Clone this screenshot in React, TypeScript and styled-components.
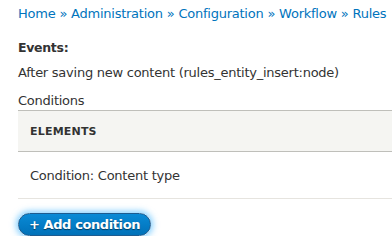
import styled, { createGlobalStyle } from 'styled-components';

const GlobalStyle = createGlobalStyle`
  html, body {
    margin: 0;
    padding: 0;
    background: #fff;
  }
  body {
    font-family: 'DejaVu Sans', 'Noto Sans', sans-serif;
    font-size: 13px;
    color: #333;
  }
`;

const S_Page = styled.div`
  padding: 6px 0 0 18px;
  width: 392px;
  box-sizing: border-box;
  overflow: hidden;
`;

const S_Breadcrumb = styled.nav`
  font-size: 13px;
  line-height: 16px;
  white-space: nowrap;
  color: #0074bd;
  letter-spacing: -0.25px;
`;

const S_Crumb = styled.a`
  color: #0074bd;
  text-decoration: none;
`;

const S_Sep = styled.span`
  color: #0074bd;
  margin: 0 4px;
`;

const S_Label = styled.div`
  margin-top: 18px;
  font-weight: bold;
  font-size: 12.5px;
  line-height: 16px;
  letter-spacing: -0.3px;
`;

const S_Text = styled.div`
  margin-top: 9px;
  font-size: 13px;
  line-height: 16px;
  letter-spacing: -0.25px;
  white-space: nowrap;
`;

const S_Caption = styled.div`
  margin-top: 12px;
  font-size: 13px;
  line-height: 16px;
  letter-spacing: -0.25px;
`;

const S_Table = styled.div`
  margin-top: 1px;
  border-top: 1px solid #bfbfba;
`;

const S_Head = styled.div`
  height: 40px;
  display: flex;
  align-items: center;
  padding-left: 12px;
  background: #f5f5f2;
  border-bottom: 1px solid #bfbfba;
  font-size: 11px;
  font-weight: bold;
  text-transform: uppercase;
  letter-spacing: 0.2px;
`;

const S_Row = styled.div`
  height: 46px;
  display: flex;
  align-items: center;
  padding-left: 12px;
  border-bottom: 1px solid #e6e4df;
  font-size: 13px;
  letter-spacing: -0.25px;
`;

const S_Button = styled.button`
  display: block;
  margin-top: 14px;
  height: 23px;
  width: 133px;
  padding: 0;
  border: 1px solid #1e5c90;
  border-radius: 20px;
  background: linear-gradient(to bottom, #0a8ad6, #0071b8);
  box-shadow: 0 0 6px 2px hsla(203, 100%, 60%, 0.6);
  color: #fff;
  font-family: 'DejaVu Sans', sans-serif;
  font-size: 13px;
  font-weight: bold;
  letter-spacing: -0.4px;
  text-shadow: 0 1px 1px rgba(0, 0, 0, 0.5);
  cursor: pointer;
`;

const crumbs = ['Home', 'Administration', 'Configuration', 'Workflow', 'Rules'];

const App = () => {
  return (
    <>
      <GlobalStyle />
      <S_Page>
        <S_Breadcrumb>
          {crumbs.map((c, i) => (
            <span key={c}>
              {i > 0 && <S_Sep>»</S_Sep>}
              <S_Crumb href="#">{c}</S_Crumb>
            </span>
          ))}
        </S_Breadcrumb>
        <S_Label>Events:</S_Label>
        <S_Text>After saving new content (rules_entity_insert:node)</S_Text>
        <S_Caption>Conditions</S_Caption>
        <S_Table>
          <S_Head>Elements</S_Head>
          <S_Row>Condition: Content type</S_Row>
        </S_Table>
        <S_Button>+ Add condition</S_Button>
      </S_Page>
    </>
  );
};

export default App;
